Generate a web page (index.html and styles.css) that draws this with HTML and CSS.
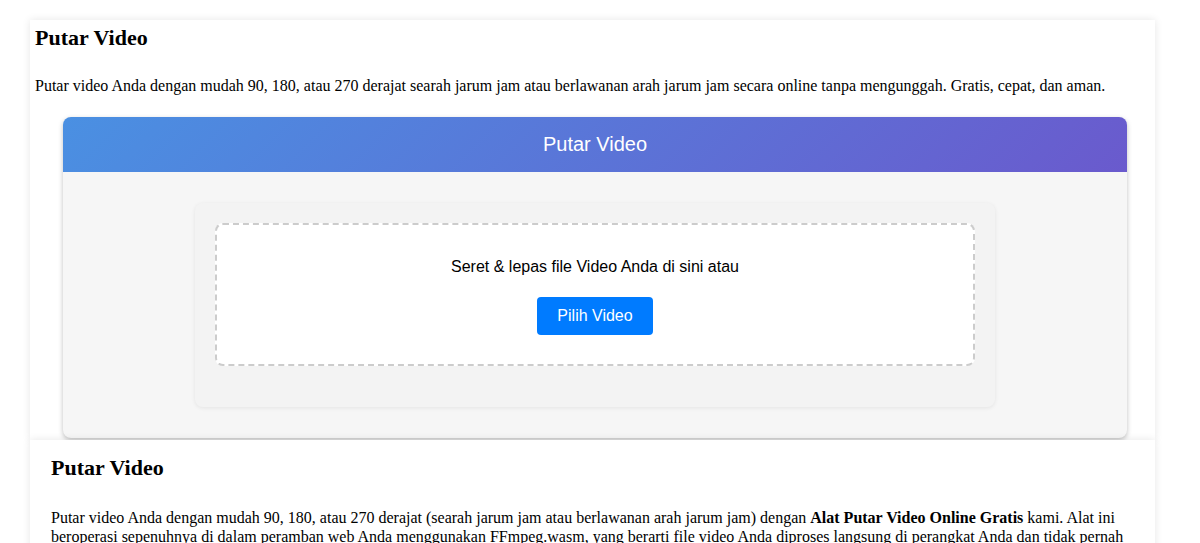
FILE: index.html
```html
<!DOCTYPE html>
<html lang="id">
<head>
    <meta charset="UTF-8">
    <meta name="viewport" content="width=device-width, initial-scale=1.0">
    <title>Putar Video</title>
    <link rel="stylesheet" href="styles.css">
</head>
<body>

    <!-- bagian atas dengan alat -->
    <section class="page-card intro">
        <h2>Putar Video</h2>
        <p>Putar video Anda dengan mudah 90, 180, atau 270 derajat searah jarum jam atau berlawanan arah jarum jam secara online tanpa mengunggah. Gratis, cepat, dan aman.</p>

        <div class="tool">
            <div class="tool-header">Putar Video</div>
            <div class="tool-body">
                <div class="upload-card">
                    <div class="drop-zone">
                        <p>Seret &amp; lepas file Video Anda di sini atau</p>
                        <button class="pick-btn">Pilih Video</button>
                    </div>
                </div>
            </div>
        </div>
    </section>

    <!-- penjelasan -->
    <section class="page-card article">
        <h2>Putar Video</h2>
        <p>Putar video Anda dengan mudah 90, 180, atau 270 derajat (searah jarum jam atau berlawanan arah jarum jam) dengan <b>Alat Putar Video Online Gratis</b> kami. Alat ini beroperasi sepenuhnya di dalam peramban web Anda menggunakan FFmpeg.wasm, yang berarti file video Anda diproses langsung di perangkat Anda dan tidak pernah diunggah ke server mana pun. Privasi Anda tetap terjaga sepenuhnya.</p>

        <h3>Cara Memutar Video</h3>
        <ol>
            <li>Klik tombol "Pilih Video" atau seret file video Anda ke area unggah.</li>
            <li>Pilih sudut putaran: 90° searah jarum jam, 90° berlawanan arah jarum jam, atau 180°.</li>
            <li>Klik "Putar" dan tunggu hingga proses selesai.</li>
            <li>Unduh video hasil putaran ke perangkat Anda.</li>
        </ol>

        <h3>Fitur Utama</h3>
        <ul>
            <li><b>Gratis sepenuhnya</b> – tanpa biaya, tanpa pendaftaran, tanpa tanda air.</li>
            <li><b>Aman dan pribadi</b> – file tidak pernah meninggalkan perangkat Anda.</li>
            <li><b>Cepat</b> – pemrosesan dilakukan langsung di peramban.</li>
            <li><b>Mendukung banyak format</b> – MP4, MOV, AVI, MKV, WEBM, dan lainnya.</li>
        </ul>

        <h3>Pertanyaan yang Sering Diajukan</h3>
        <p><b>Apakah kualitas video akan berkurang?</b><br>Alat ini berusaha mempertahankan kualitas asli video Anda semaksimal mungkin.</p>
        <p><b>Apakah ada batas ukuran file?</b><br>Batasnya tergantung pada memori perangkat dan peramban yang Anda gunakan.</p>
        <p><b>Apakah saya perlu menginstal perangkat lunak?</b><br>Tidak. Semua berjalan langsung di peramban web Anda.</p>
        <p><b>Apakah alat ini berfungsi di ponsel?</b><br>Ya, alat ini dapat digunakan di peramban modern pada ponsel maupun tablet.</p>
        <p><b>Bisakah saya memutar video 270 derajat?</b><br>Ya, memutar 270 derajat searah jarum jam sama dengan memutar 90 derajat berlawanan arah jarum jam.</p>
    </section>

</body>
</html>
```

FILE: styles.css
```css
body {
    font-family: "Liberation Serif", "Times New Roman", serif;
    margin: 0;
    padding: 20px 45px 40px 30px;
    background-color: #fff;
    color: #000;
}
/* kartu halaman */
.page-card {
    background-color: #fff;
    box-shadow: 0 0 8px rgba(0, 0, 0, 0.1);
}
.intro {
    padding: 5px 0 2px 5px;
}
.intro h2 {
    margin: 0 0 26px 0;
    font-size: 22px;
}
.intro p {
    margin: 0 0 22px 0;
    font-size: 16px;
}
/* alat putar video */
.tool {
    width: 95%;
    margin: 0 auto;
    border-radius: 8px;
    overflow: hidden;
    background-color: #f6f6f6;
    box-shadow: 0 2px 5px rgba(0, 0, 0, 0.25);
    font-family: "Liberation Sans", Arial, sans-serif;
}
.tool-header {
    background: linear-gradient(135deg, #4a90e2, #6a5acd);
    color: #fff;
    text-align: center;
    font-size: 20px;
    padding: 16px 0;
}
.tool-body {
    padding: 31px 20px;
}
.upload-card {
    max-width: 760px;
    margin: 0 auto;
    padding: 20px 20px 41px 20px;
    background-color: #f3f3f3;
    border-radius: 8px;
    box-shadow: 0 1px 4px rgba(0, 0, 0, 0.08);
}
.drop-zone {
    border: 2px dashed #ccc;
    border-radius: 8px;
    background-color: #fff;
    text-align: center;
    padding: 33px 20px 29px 20px;
}
.drop-zone p {
    margin: 0 0 21px 0;
    font-size: 16px;
}
.pick-btn {
    font-family: "Liberation Sans", Arial, sans-serif;
    font-size: 16px;
    padding: 10px 20px;
    border: none;
    border-radius: 4px;
    background-color: #007bff;
    color: #fff;
    cursor: pointer;
}
/* artikel */
.article {
    padding: 15px 20px 20px 21px;
}
.article h2 {
    margin: 0 0 27px 0;
    font-size: 22px;
}
.article p {
    margin: 0 0 16px 0;
    line-height: 19px;
}
.article h3 {
    margin: 24px 0 12px 0;
    font-size: 18px;
}
.article li {
    margin-bottom: 6px;
}
```
